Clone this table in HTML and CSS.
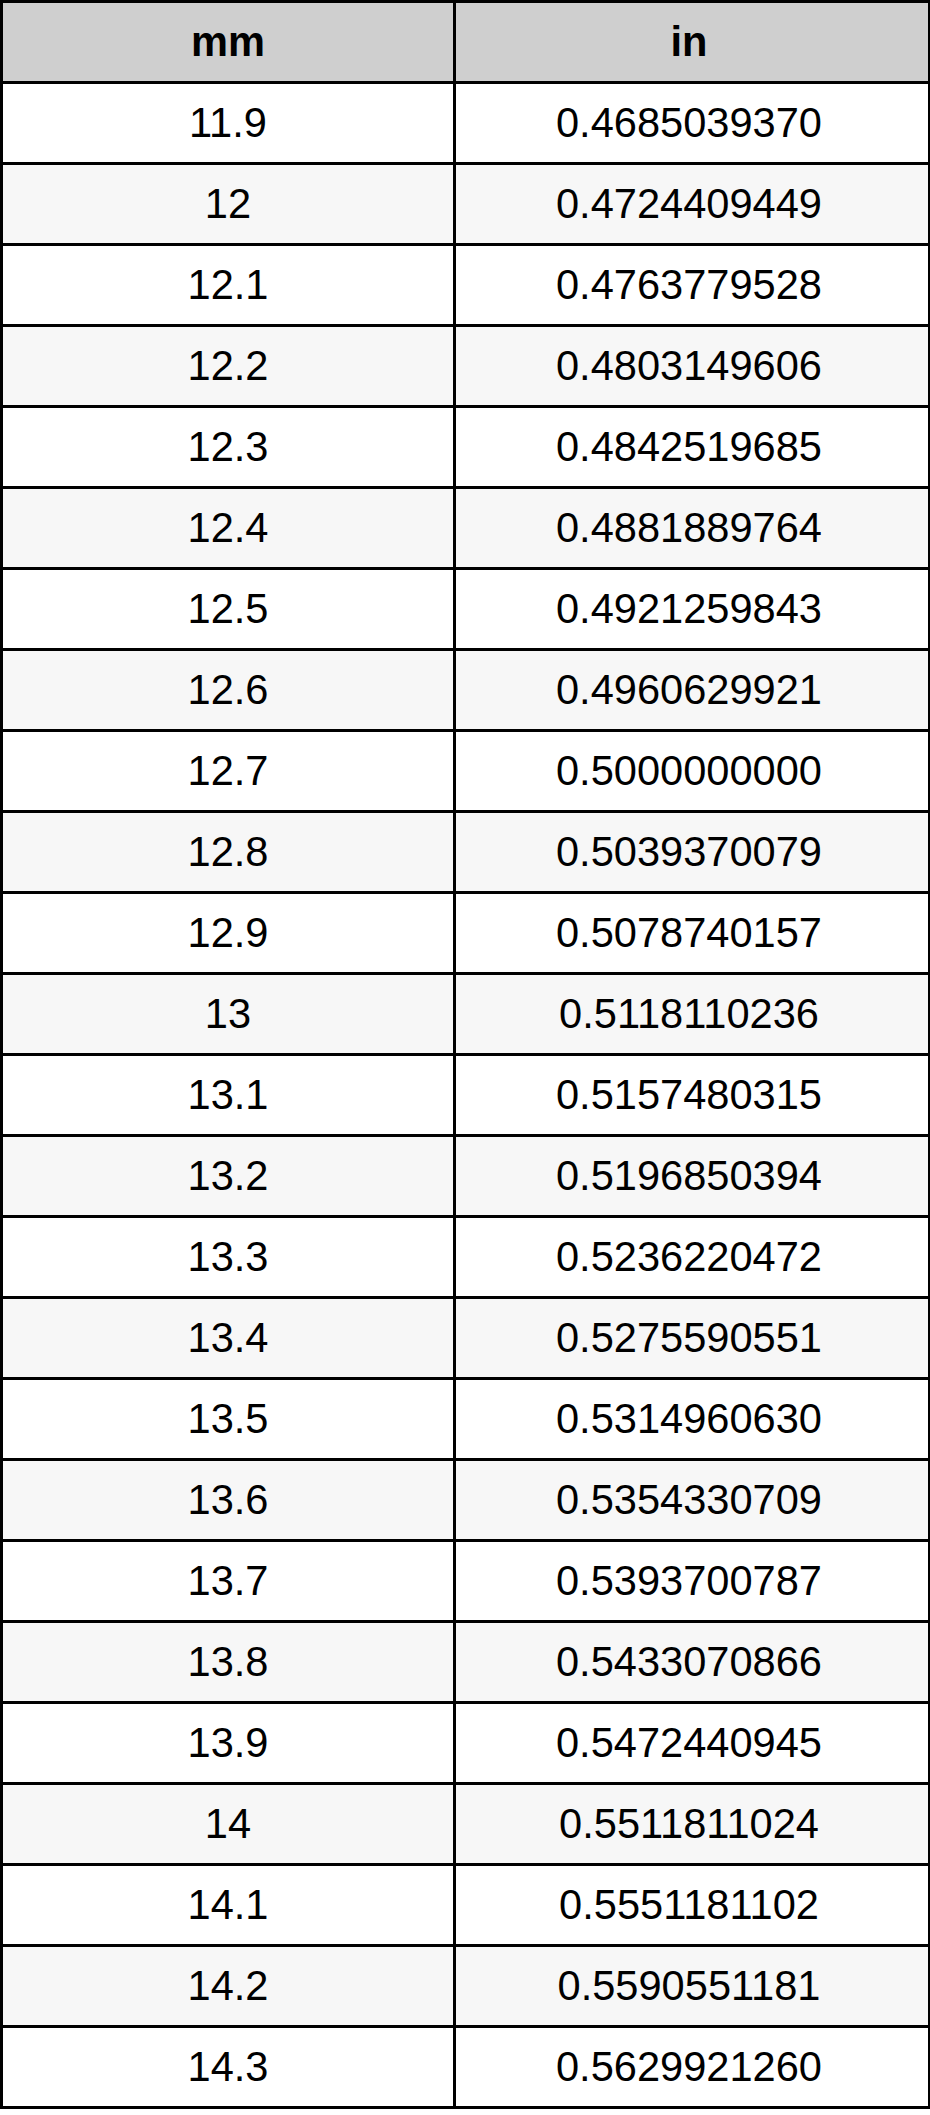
FILE: index.html
```html
<!DOCTYPE html>
<html>
<head>
<meta charset="utf-8">
<title>mm to in</title>
<link rel="stylesheet" href="styles.css">
</head>
<body>
<table class="conv">
<colgroup><col class="c1"><col class="c2"></colgroup>
<thead>
<tr><th>mm</th><th class="v">in</th></tr>
</thead>
<tbody>
<tr><td>11.9</td><td class="v">0.4685039370</td></tr>
<tr><td>12</td><td class="v">0.4724409449</td></tr>
<tr><td>12.1</td><td class="v">0.4763779528</td></tr>
<tr><td>12.2</td><td class="v">0.4803149606</td></tr>
<tr><td>12.3</td><td class="v">0.4842519685</td></tr>
<tr><td>12.4</td><td class="v">0.4881889764</td></tr>
<tr><td>12.5</td><td class="v">0.4921259843</td></tr>
<tr><td>12.6</td><td class="v">0.4960629921</td></tr>
<tr><td>12.7</td><td class="v">0.5000000000</td></tr>
<tr><td>12.8</td><td class="v">0.5039370079</td></tr>
<tr><td>12.9</td><td class="v">0.5078740157</td></tr>
<tr><td>13</td><td class="v">0.5118110236</td></tr>
<tr><td>13.1</td><td class="v">0.5157480315</td></tr>
<tr><td>13.2</td><td class="v">0.5196850394</td></tr>
<tr><td>13.3</td><td class="v">0.5236220472</td></tr>
<tr><td>13.4</td><td class="v">0.5275590551</td></tr>
<tr><td>13.5</td><td class="v">0.5314960630</td></tr>
<tr><td>13.6</td><td class="v">0.5354330709</td></tr>
<tr><td>13.7</td><td class="v">0.5393700787</td></tr>
<tr><td>13.8</td><td class="v">0.5433070866</td></tr>
<tr><td>13.9</td><td class="v">0.5472440945</td></tr>
<tr><td>14</td><td class="v">0.5511811024</td></tr>
<tr><td>14.1</td><td class="v">0.5551181102</td></tr>
<tr><td>14.2</td><td class="v">0.5590551181</td></tr>
<tr><td>14.3</td><td class="v">0.5629921260</td></tr>
</tbody>
</table>
</body>
</html>
```
FILE: styles.css
```css
html, body {
  margin: 0;
  padding: 0;
  background: #ffffff;
}

.conv {
  width: 930px;
  table-layout: fixed;
  border-collapse: separate;
  border-spacing: 0;
  border-top: 3px solid #000;
  border-left: 3px solid #000;
  border-right: 2px solid #000;
  font-family: "Liberation Sans", Arial, sans-serif;
  font-size: 41.6px;
  color: #000;
}

.conv .c1 { width: 453px; }
.conv .c2 { width: 472px; }

.conv th,
.conv td {
  height: 78px;
  padding: 0;
  text-align: center;
  vertical-align: middle;
  border-bottom: 3px solid #000;
  line-height: 1;
}

.conv th:first-child,
.conv td:first-child {
  border-right: 3px solid #000;
}

.conv .v {
  padding-right: 6px;
}

.conv th {
  background: #cfcfcf;
  font-weight: bold;
}

.conv tbody tr:nth-child(odd) td {
  background: #ffffff;
}

.conv tbody tr:nth-child(even) td {
  background: #f7f7f7;
}
```
